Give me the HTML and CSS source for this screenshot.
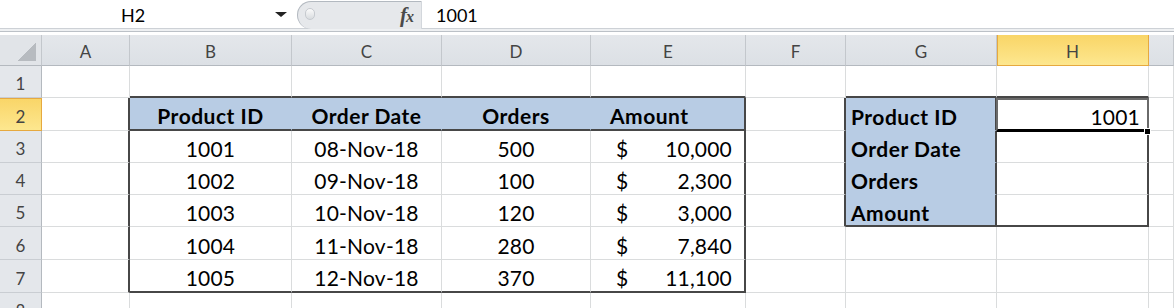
FILE: index.html
```html
<!DOCTYPE html>
<html lang="en">
<head>
    <meta charset="UTF-8">
    <title>Order Lookup</title>
    <link rel="stylesheet" href="styles.css">
</head>
<body>

<div class="formula-bar">
    <div class="name-box">
        <span class="name">H2</span>
        <span class="drop"></span>
    </div>
    <div class="fx-box">
        <span class="nub"></span>
        <span class="fx"><i>f</i><i class="sub">x</i></span>
    </div>
    <div class="formula">1001</div>
</div>
<div class="rule"></div>

<div class="sheet">
    <!-- column headers -->
    <div class="corner"></div>
    <div class="ch">A</div>
    <div class="ch">B</div>
    <div class="ch">C</div>
    <div class="ch">D</div>
    <div class="ch">E</div>
    <div class="ch">F</div>
    <div class="ch">G</div>
    <div class="ch on">H</div>
    <div class="ch"></div>

    <!-- row 1 -->
    <div class="rh">1</div>
    <div class="c"></div>
    <div class="c bb"></div>
    <div class="c bb"></div>
    <div class="c bb"></div>
    <div class="c bb"></div>
    <div class="c"></div>
    <div class="c bb"></div>
    <div class="c bb"></div>
    <div class="c"></div>

    <!-- row 2 -->
    <div class="rh on">2</div>
    <div class="c br"></div>
    <div class="c hd">Product ID</div>
    <div class="c hd">Order Date</div>
    <div class="c hd">Orders</div>
    <div class="c hd amt br">Amount</div>
    <div class="c br"></div>
    <div class="c lbl br">Product ID</div>
    <div class="c num br sel">1001</div>
    <div class="c"></div>

    <!-- row 3 -->
    <div class="rh">3</div>
    <div class="c br"></div>
    <div class="c ctr">1001</div>
    <div class="c ctr">08-Nov-18</div>
    <div class="c ctr">500</div>
    <div class="c acct br"><span>$</span><span>10,000</span></div>
    <div class="c br"></div>
    <div class="c lbl br">Order Date</div>
    <div class="c num br"></div>
    <div class="c"></div>

    <!-- row 4 -->
    <div class="rh">4</div>
    <div class="c br"></div>
    <div class="c ctr">1002</div>
    <div class="c ctr">09-Nov-18</div>
    <div class="c ctr">100</div>
    <div class="c acct br"><span>$</span><span>2,300</span></div>
    <div class="c br"></div>
    <div class="c lbl br">Orders</div>
    <div class="c num br"></div>
    <div class="c"></div>

    <!-- row 5 -->
    <div class="rh">5</div>
    <div class="c br"></div>
    <div class="c ctr">1003</div>
    <div class="c ctr">10-Nov-18</div>
    <div class="c ctr">120</div>
    <div class="c acct br"><span>$</span><span>3,000</span></div>
    <div class="c br"></div>
    <div class="c lbl br bb">Amount</div>
    <div class="c num br bb"></div>
    <div class="c"></div>

    <!-- row 6 -->
    <div class="rh">6</div>
    <div class="c br"></div>
    <div class="c ctr">1004</div>
    <div class="c ctr">11-Nov-18</div>
    <div class="c ctr">280</div>
    <div class="c acct br"><span>$</span><span>7,840</span></div>
    <div class="c"></div>
    <div class="c"></div>
    <div class="c"></div>
    <div class="c"></div>

    <!-- row 7 -->
    <div class="rh">7</div>
    <div class="c br"></div>
    <div class="c ctr bb">1005</div>
    <div class="c ctr bb">12-Nov-18</div>
    <div class="c ctr bb">370</div>
    <div class="c acct br bb"><span>$</span><span>11,100</span></div>
    <div class="c"></div>
    <div class="c"></div>
    <div class="c"></div>
    <div class="c"></div>

    <!-- row 8 -->
    <div class="rh">8</div>
    <div class="c"></div>
    <div class="c"></div>
    <div class="c"></div>
    <div class="c"></div>
    <div class="c"></div>
    <div class="c"></div>
    <div class="c"></div>
    <div class="c"></div>
    <div class="c"></div>
</div>

</body>
</html>
```

FILE: styles.css
```css
html, body {
    margin: 0;
    overflow: hidden;
}
body {
    font-family: Lato, "Liberation Sans", sans-serif;
    background: #fff;
    color: #000;
}

/* formula bar */
.formula-bar {
    display: flex;
    height: 29px;
    border-bottom: 1px solid #cdd1d6;
    box-sizing: border-box;
}
.name-box {
    width: 297px;
    display: flex;
    align-items: center;
}
.name {
    flex: 1;
    text-align: center;
    font-size: 18px;
    padding: 2px 9px 0 0;
}
.drop {
    width: 0;
    height: 0;
    border-left: 6px solid transparent;
    border-right: 6px solid transparent;
    border-top: 5px solid #222;
    margin-right: 10px;
}
.fx-box {
    width: 125px;
    height: 28px;
    margin-top: 1px;
    box-sizing: border-box;
    background: #e6e8eb;
    border: 1px solid #b3b9c0;
    border-right-color: #d3d7dc;
    border-bottom: none;
    border-radius: 14px 0 0 14px;
    display: flex;
    align-items: center;
    justify-content: space-between;
    padding: 0 8px 0 7px;
}
.nub {
    width: 10px;
    height: 12px;
    margin-top: -3px;
    border-radius: 5px;
    border: 1px solid #c6cacf;
    background: linear-gradient(#fbfbfb, #d9dcdf);
    box-sizing: border-box;
}
.fx {
    font-family: "Liberation Serif", serif;
    font-weight: bold;
    color: #4a4a4a;
    font-size: 21px;
    letter-spacing: -1px;
}
.fx .sub {
    font-size: 16px;
}
.formula {
    padding: 2px 0 0 14px;
    font-size: 18px;
    display: flex;
    align-items: center;
}
.rule {
    height: 6px;
    background: linear-gradient(#eef0f2 0 2px, #bcc1c7 2px 3px, #fff 3px);
}

/* grid */
.sheet {
    display: grid;
    grid-template-columns: 42px 88px 162px 150px 149px 155px 100px 151px 152px 1fr;
    grid-template-rows: 31px 32px 33px 32px 32px 32px 33px 33px 32px;
}
.sheet > div {
    box-sizing: border-box;
    display: flex;
    align-items: center;
    white-space: nowrap;
}
.corner {
    background: linear-gradient(to top left, #b7bbc0 50%, transparent 50%) no-repeat right 5px bottom 4px / 19px 18px, #e1e4e8;
    border-right: 1px solid #c3c7cc;
    border-bottom: 1px solid #b4b9bf;
}
.ch {
    justify-content: center;
    padding-top: 3px;
    font-size: 17px;
    color: #444;
    background: linear-gradient(#e4e7eb, #dce0e5);
    border-right: 1px solid #c3c7cc;
    border-bottom: 1px solid #b4b9bf;
}
.rh {
    justify-content: center;
    padding-top: 4px;
    font-size: 17px;
    color: #444;
    background: #e4e7eb;
    border-right: 1px solid #b4b9bf;
    border-bottom: 1px solid #c9cdd2;
}
.ch.on, .rh.on {
    background: linear-gradient(#f9d567, #fde78f);
    border-color: #e6a93f;
}
.ch.on {
    box-shadow: inset 1px 0 0 #e6a93f;
}
.rh.on {
    box-shadow: inset 0 1px 0 #e6a93f;
}

.c {
    font-size: 21px;
    letter-spacing: 0.2px;
    padding-top: 4px;
    border-right: 1px solid #dadcdd;
    border-bottom: 1px solid #dadcdd;
}
.ctr {
    justify-content: center;
}
.num {
    justify-content: flex-end;
    padding-right: 7px;
}
.acct {
    justify-content: space-between;
    padding: 4px 12px 0 25px;
}
.hd {
    justify-content: center;
    font-weight: bold;
    letter-spacing: 0.5px;
    background: #b8cce4;
    border-right-color: #b8cce4;
    border-bottom: 2px solid #474747;
}
.hd.amt {
    justify-content: flex-start;
    padding-left: 19px;
}
.lbl {
    font-weight: bold;
    letter-spacing: 0.5px;
    padding-left: 5px;
    background: #b8cce4;
    border-bottom-color: #b8cce4;
}

/* table edges */
.br {
    border-right: 2px solid #474747;
}
.bb {
    border-bottom: 2px solid #474747;
}

/* active cell */
.sel {
    position: relative;
}
.sel::before {
    content: "";
    position: absolute;
    top: 0;
    left: -1px;
    right: -2px;
    bottom: -2px;
    border: 2px solid #6a6a6a;
    border-bottom: 3px solid #000;
}
.sel::after {
    content: "";
    position: absolute;
    right: -4px;
    bottom: -5px;
    width: 5px;
    height: 5px;
    background: #000;
    border: 1px solid #fff;
}
```
